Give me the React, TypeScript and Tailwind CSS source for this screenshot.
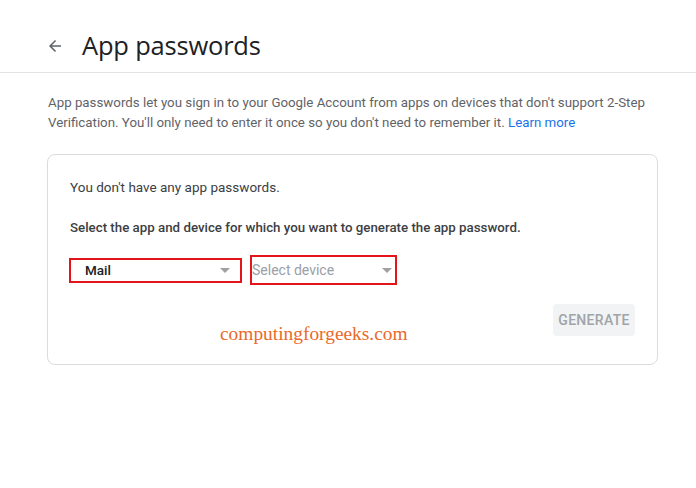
import React from "react";

function Caret() {
  return (
    <svg width="10" height="5" viewBox="0 0 10 5" className="block">
      <path d="M0 0 L10 0 L5 5 Z" fill="#a0a0a0" />
    </svg>
  );
}

export default function App() {
  return (
    <div className="w-[696px] h-[488px] bg-white overflow-hidden" style={{ fontFamily: "Roboto, 'Noto Sans', sans-serif" }}>
      <header className="h-[73px] border-b border-[#e3e3e3] flex items-center pl-[46px] pt-[20px]">
        <svg width="18" height="18" viewBox="0 0 24 24" className="block">
          <path d="M20 11H7.83l5.59-5.59L12 4l-8 8 8 8 1.41-1.41L7.83 13H20v-2z" fill="#5f6368" />
        </svg>
        <h1 className="ml-[18px] text-[25.5px] leading-none text-[#202124]" style={{ fontFamily: "'Open Sans', Roboto, sans-serif", letterSpacing: "-0.2px" }}>App passwords</h1>
      </header>
      <p className="mt-[20px] ml-[48px] w-[620px] text-[13.3px] leading-[20px] text-[#5f6368]">
        App passwords let you sign in to your Google Account from apps on devices that don't support 2-Step Verification. You'll only need to enter it once so you don't need to remember it. <span className="text-[#1a73e8]">Learn more</span>
      </p>
      <div className="mt-[21px] ml-[47px] w-[611px] h-[211px] border border-[#dadce0] rounded-[8px] relative">
        <p className="mt-[23px] ml-[22px] text-[13.5px] leading-[18px] text-[#3c4043]">You don't have any app passwords.</p>
        <p className="mt-[23px] ml-[22px] text-[13.3px] leading-[18px] font-medium text-[#3c4043]">Select the app and device for which you want to generate the app password.</p>
        <div className="mt-[18px] ml-[21px] flex items-center">
          <div className="w-[173px] h-[25px] border-2 border-[#e3151b] flex items-center justify-between pl-[14px] pr-[10px]">
            <span className="text-[13.5px] font-medium text-[#202124]">Mail</span>
            <Caret />
          </div>
          <div className="ml-[8px] w-[147px] h-[30px] border-2 border-[#e3151b] flex items-center justify-between pl-[0px] pr-[3px]">
            <span className="text-[14px] text-[#9aa0a6]">Select device</span>
            <Caret />
          </div>
        </div>
        <div className="absolute right-[22px] top-[149px] w-[82px] h-[32px] bg-[#f1f3f4] rounded-[4px] flex items-center justify-center">
          <span className="text-[14px] font-medium text-[#a0a4a8] tracking-[0.3px]">GENERATE</span>
        </div>
        <div className="absolute left-[172px] top-[169px] text-[19.4px] leading-none text-[#ea6a2a]" style={{ fontFamily: "'Liberation Serif', 'DejaVu Serif', serif" }}>computingforgeeks.com</div>
      </div>
    </div>
  );
}
